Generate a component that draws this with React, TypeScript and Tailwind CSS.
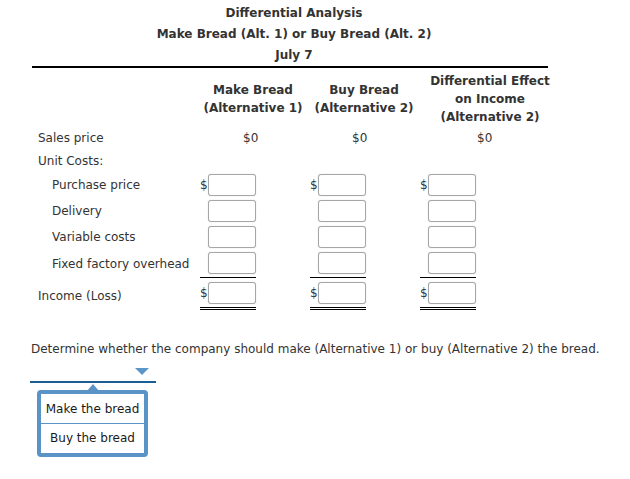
import React from 'react';

const font = { fontFamily: '"DejaVu Sans", Verdana, sans-serif' };

function MoneyInput({ dollar }: { dollar?: boolean }) {
  return (
    <div className="flex items-center h-[22px]">
      <span className="w-[8px] text-[12px] leading-none text-[#333]">{dollar ? '$' : ''}</span>
      <div className="w-[48px] h-[22px] rounded-[3px] border border-[#a6a6a6] bg-white shadow-[0_0_1px_rgba(0,0,0,0.25)]" />
    </div>
  );
}

const costRows = ['Purchase price', 'Delivery', 'Variable costs'];

export default function App() {
  return (
    <div className="w-[630px] h-[479px] bg-white text-[#333] text-[12px]" style={font}>
      <div className="w-[516px] ml-[32px]">
        {/* heading */}
        <div className="pt-[3px] pl-[8px] font-bold text-center leading-[21px]">
          <div>Differential Analysis</div>
          <div>Make Bread (Alt. 1) or Buy Bread (Alt. 2)</div>
          <div>July 7</div>
        </div>
        <div className="border-t-2 border-black" />

        {/* column headers */}
        <div className="flex items-center mt-[4px] font-bold leading-[18px] h-[54px]">
          <div className="w-[169px] shrink-0" />
          <div className="w-[104px] shrink-0 text-center">Make Bread<br />(Alternative 1)</div>
          <div className="w-[104px] shrink-0 ml-[7px] text-center">Buy Bread<br />(Alternative 2)</div>
          <div className="w-[124px] shrink-0 ml-[12px] text-center">Differential Effect<br />on Income<br />(Alternative 2)</div>
        </div>

        {/* sales price */}
        <div className="flex items-center h-[22px] mt-[1px]">
          <div className="w-[168px] pl-[6px]">Sales price</div>
          <div className="w-[110px] pl-[43px]">$0</div>
          <div className="w-[110px] pl-[42px]">$0</div>
          <div className="pl-[57px]">$0</div>
        </div>
        <div className="flex items-center h-[23px]">
          <div className="pl-[6px]">Unit Costs:</div>
        </div>

        {costRows.map((label, i) => (
          <div key={label} className="flex items-center h-[26px]">
            <div className="w-[168px] pl-[20px]">{label}</div>
            <div className="w-[110px]"><MoneyInput dollar={i === 0} /></div>
            <div className="w-[110px]"><MoneyInput dollar={i === 0} /></div>
            <div><MoneyInput dollar={i === 0} /></div>
          </div>
        ))}

        <div className="flex items-start h-[28px]">
          <div className="w-[168px] pl-[20px] pt-[5px]">Fixed factory overhead</div>
          <div className="w-[110px]"><div className="w-[56px] pt-[2px] pb-[3px] border-b border-black"><MoneyInput /></div></div>
          <div className="w-[110px]"><div className="w-[56px] pt-[2px] pb-[3px] border-b border-black"><MoneyInput /></div></div>
          <div><div className="w-[56px] pt-[2px] pb-[3px] border-b border-black"><MoneyInput /></div></div>
        </div>

        <div className="flex items-start h-[32px]">
          <div className="w-[168px] pl-[6px] pt-[9px]">Income (Loss)</div>
          <div className="w-[110px]"><div className="w-[56px] pt-[4px] pb-[3px] border-b-[3px] border-double border-black"><MoneyInput dollar /></div></div>
          <div className="w-[110px]"><div className="w-[56px] pt-[4px] pb-[3px] border-b-[3px] border-double border-black"><MoneyInput dollar /></div></div>
          <div><div className="w-[56px] pt-[4px] pb-[3px] border-b-[3px] border-double border-black"><MoneyInput dollar /></div></div>
        </div>
      </div>

      {/* question */}
      <div className="ml-[31px] mt-[31px] leading-[16px]">
        Determine whether the company should make (Alternative 1) or buy (Alternative 2) the bread.
      </div>

      <div className="ml-[30px] mt-[11px] w-[126px]">
        <div className="flex justify-end pr-[7px] h-[13px] items-start">
          <svg width="14" height="7" viewBox="0 0 14 7"><polygon points="0,0 14,0 7,7" fill="#5a96c8" /></svg>
        </div>
        <div className="h-[2px] bg-[#1b5e93]" />
        <div className="relative ml-[7px] mt-[7px] w-[111px]">
          <svg className="absolute left-[50px] -top-[6px]" width="12" height="7" viewBox="0 0 12 7"><polygon points="0,7 12,7 6,0" fill="#5a94c6" /></svg>
          <div className="border-4 border-[#5a94c6] rounded-[4px] bg-white text-center text-[#1a1a1a]">
            <div className="h-[30px] leading-[30px] border-b border-[#5a94c6]">Make the bread</div>
            <div className="h-[29px] leading-[29px]">Buy the bread</div>
          </div>
        </div>
      </div>
    </div>
  );
}
